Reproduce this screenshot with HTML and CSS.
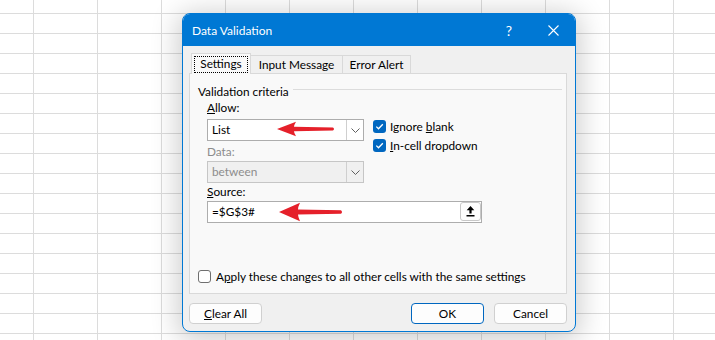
FILE: index.html
```html
<!DOCTYPE html>
<html lang="en">
<head>
<meta charset="utf-8">
<title>Data Validation</title>
<link rel="stylesheet" href="styles.css">
</head>
<body>
<div class="sheet">
  <div class="dialog">
    <div class="titlebar">
      <span class="title">Data Validation</span>
      <span class="help">?</span>
      <span class="close"><svg width="11" height="11" viewBox="0 0 11 11"><path d="M0.5 0.5 L10.5 10.5 M10.5 0.5 L0.5 10.5" stroke="#fff" stroke-width="1.1" fill="none"/></svg></span>
    </div>
    <div class="body">
      <div class="tabs">
        <div class="tab active"><span class="focus">Settings</span></div>
        <div class="tab">Input Message</div>
        <div class="tab">Error Alert</div>
      </div>
      <div class="panel">
        <div class="group-head"><span>Validation criteria</span><span class="rule"></span></div>
        <div class="criteria">
          <div class="lbl allow-label"><u>A</u>llow:</div>
          <div class="combo allow-combo">
            <span class="combo-text">List</span>
            <span class="combo-btn"><svg width="9" height="5" viewBox="0 0 9 5"><polyline points="0.5,0.5 4.5,4.5 8.5,0.5" fill="none" stroke="#5f5f5f" stroke-width="1"/></svg></span>
            <svg class="arrow arrow-1" width="58" height="16" viewBox="0 0 58 16"><path d="M0 8 L19 0.7 Q17 4 17 5.8 L56 6.5 Q58 8 56 9.5 L17 10.2 Q17 12 19 15.3 Z" fill="#e5202a"/></svg>
          </div>
          <div class="checks">
            <div class="check"><span class="cb"><svg width="13" height="13" viewBox="0 0 13 13"><polyline points="3.3,6.6 5.5,8.8 9.8,4.2" fill="none" stroke="#fff" stroke-width="1.3"/></svg></span><span>Ignore <u>b</u>lank</span></div>
            <div class="check"><span class="cb"><svg width="13" height="13" viewBox="0 0 13 13"><polyline points="3.3,6.6 5.5,8.8 9.8,4.2" fill="none" stroke="#fff" stroke-width="1.3"/></svg></span><span><u>I</u>n-cell dropdown</span></div>
          </div>
          <div class="lbl data-label disabled">Data:</div>
          <div class="combo data-combo disabled">
            <span class="combo-text">between</span>
            <span class="combo-btn"><svg width="9" height="5" viewBox="0 0 9 5"><polyline points="0.5,0.5 4.5,4.5 8.5,0.5" fill="none" stroke="#5f5f5f" stroke-width="1"/></svg></span>
          </div>
        </div>
        <div class="source">
          <div class="lbl source-label"><u>S</u>ource:</div>
          <div class="source-box">
            <span class="combo-text">=$G$3#</span>
            <span class="ref-btn"><svg width="9" height="11" viewBox="0 0 9 11"><path d="M4.5 0 L8.3 4.2 L5.6 4.2 L5.6 7.4 L3.4 7.4 L3.4 4.2 L0.7 4.2 Z" fill="#000"/><rect x="0.5" y="9" width="8" height="1.5" fill="#000"/></svg></span>
            <svg class="arrow arrow-2" width="64" height="20" viewBox="0 0 64 20"><path d="M0 10 L21 0.8 Q19 5 19 7.4 L62 8.2 Q64 10 62 11.8 L19 12.6 Q19 15 21 19.2 Z" fill="#e5202a"/></svg>
          </div>
        </div>
        <div class="check apply"><span class="cb empty"></span><span>A<u>p</u>ply these changes to all other cells with the same settings</span></div>
      </div>
      <div class="buttons">
        <div class="btn"><u>C</u>lear All</div>
        <div class="btn primary">OK</div>
        <div class="btn">Cancel</div>
      </div>
    </div>
  </div>
</div>
</body>
</html>
```
FILE: styles.css
```css
* { box-sizing: border-box; }
html, body { margin: 0; padding: 0; }
body {
  font-family: "Segoe UI", Lato, "Noto Sans", sans-serif;
  font-size: 11.8px;
  color: #000;
  background-color: #fff;
  background-image:
    linear-gradient(to right, #dcdcdc 1px, transparent 1px),
    linear-gradient(to bottom, #dcdcdc 1px, transparent 1px);
  background-size: 64px 100%, 100% 20px;
  background-position: 33px 0, 0 13px;
}
.sheet {
  width: 715px;
  height: 340px;
  padding: 13px 0 0 182px;
  overflow: hidden;
}
.dialog {
  width: 394px;
  height: 319px;
  border: 1px solid #0078d4;
  border-radius: 8px;
  background: #f0f0f0;
  box-shadow: 0 4px 28px 4px rgba(0, 0, 0, 0.2);
  overflow: hidden;
  display: flex;
  flex-direction: column;
}
.titlebar {
  height: 32px;
  flex: none;
  background: #0078d4;
  color: #fff;
  display: flex;
  align-items: center;
  padding: 0 12px 0 9px;
}
.title { font-size: 12px; }
.help {
  margin-left: auto;
  width: 20px;
  text-align: center;
  font-size: 14px;
}
.close {
  width: 20px;
  margin-left: 24px;
  display: flex;
  justify-content: center;
}
.body {
  flex: 1;
  padding: 7px 8px 0 6px;
}
.tabs {
  display: flex;
  align-items: flex-end;
  height: 20px;
  margin-left: 2px;
  position: relative;
  z-index: 1;
}
.tab {
  height: 18px;
  border: 1px solid #d9d9d9;
  border-bottom: none;
  background: #f0f0f0;
  text-align: center;
  line-height: 17px;
}
.tab + .tab { margin-left: -1px; }
.tab:nth-child(2) { width: 93px; }
.tab:nth-child(3) { width: 69px; }
.tab.active {
  width: 60px;
  height: 21px;
  margin-bottom: -1px;
  background: #f9f9f9;
  padding: 1px 0 0 1px;
  position: relative;
  z-index: 2;
}
.focus {
  display: block;
  width: 54px;
  height: 17px;
  margin: 1px 0 0 1px;
  border: 1px dotted #000;
  line-height: 14px;
  text-align: center;
}
.panel {
  width: 378px;
  height: 221px;
  border: 1px solid #d9d9d9;
  background: #f9f9f9;
  padding-top: 9px;
}
.group-head {
  display: flex;
  align-items: center;
  height: 16px;
  padding-left: 8px;
}
.rule {
  flex: 1;
  height: 1px;
  background: #dcdcdc;
  margin: -3px 4px 0 4px;
}
.criteria {
  display: grid;
  grid-template-columns: 157px auto;
  column-gap: 9px;
  padding-left: 17px;
}
.lbl { height: 16px; line-height: 16px; }
.allow-label { grid-column: 1; grid-row: 1; margin-top: 1px; }
.allow-combo { grid-column: 1; grid-row: 2; margin-top: 3px; }
.checks { grid-column: 2; grid-row: 2 / span 3; margin-top: 1px; }
.data-label { grid-column: 1; grid-row: 3; margin-top: 3px; }
.data-combo { grid-column: 1; grid-row: 4; margin-top: 1px; }
.disabled { color: #8c8c8c; }
.combo {
  position: relative;
  height: 22px;
  border: 1px solid #adadad;
  background: #fff;
  display: flex;
}
.combo.disabled {
  background: #f0f0f0;
  border-color: #c6c6c6;
}
.combo-text {
  flex: 1;
  padding-left: 4px;
  line-height: 20px;
}
.combo-btn {
  width: 17px;
  border-left: 1px solid #cfcfcf;
  display: flex;
  align-items: center;
  justify-content: center;
}
.check {
  display: flex;
  align-items: center;
  height: 19px;
}
.cb {
  width: 13px;
  height: 13px;
  border-radius: 3px;
  background: #0067c0;
  margin-right: 4px;
  display: flex;
}
.cb.empty {
  background: #fff;
  border: 1px solid #6f6f6f;
  margin-right: 5px;
}
.source { padding-left: 17px; }
.source-label { margin-top: 1px; }
.source-box {
  position: relative;
  margin-top: 1px;
  width: 275px;
  height: 22px;
  border: 1px solid #adadad;
  background: #fff;
  display: flex;
}
.ref-btn {
  width: 21px;
  height: 19px;
  border: 1px solid #c8c8c8;
  border-radius: 3px;
  background: #fdfdfd;
  display: flex;
  align-items: center;
  justify-content: center;
}
.arrow { position: absolute; }
.arrow-1 { left: 69px; top: 1px; }
.arrow-2 { left: 71px; top: 0px; }
.apply { margin-top: 44px; padding-left: 8px; }
.buttons {
  display: flex;
  margin-top: 9px;
}
.btn {
  width: 73px;
  height: 21px;
  border: 1px solid #d0d0d0;
  border-radius: 4px;
  background: #fdfdfd;
  text-align: center;
  line-height: 19px;
}
.btn.primary {
  margin-left: auto;
  border-color: #0067c0;
}
.btn + .btn.primary + .btn { margin-left: 10px; }
```
